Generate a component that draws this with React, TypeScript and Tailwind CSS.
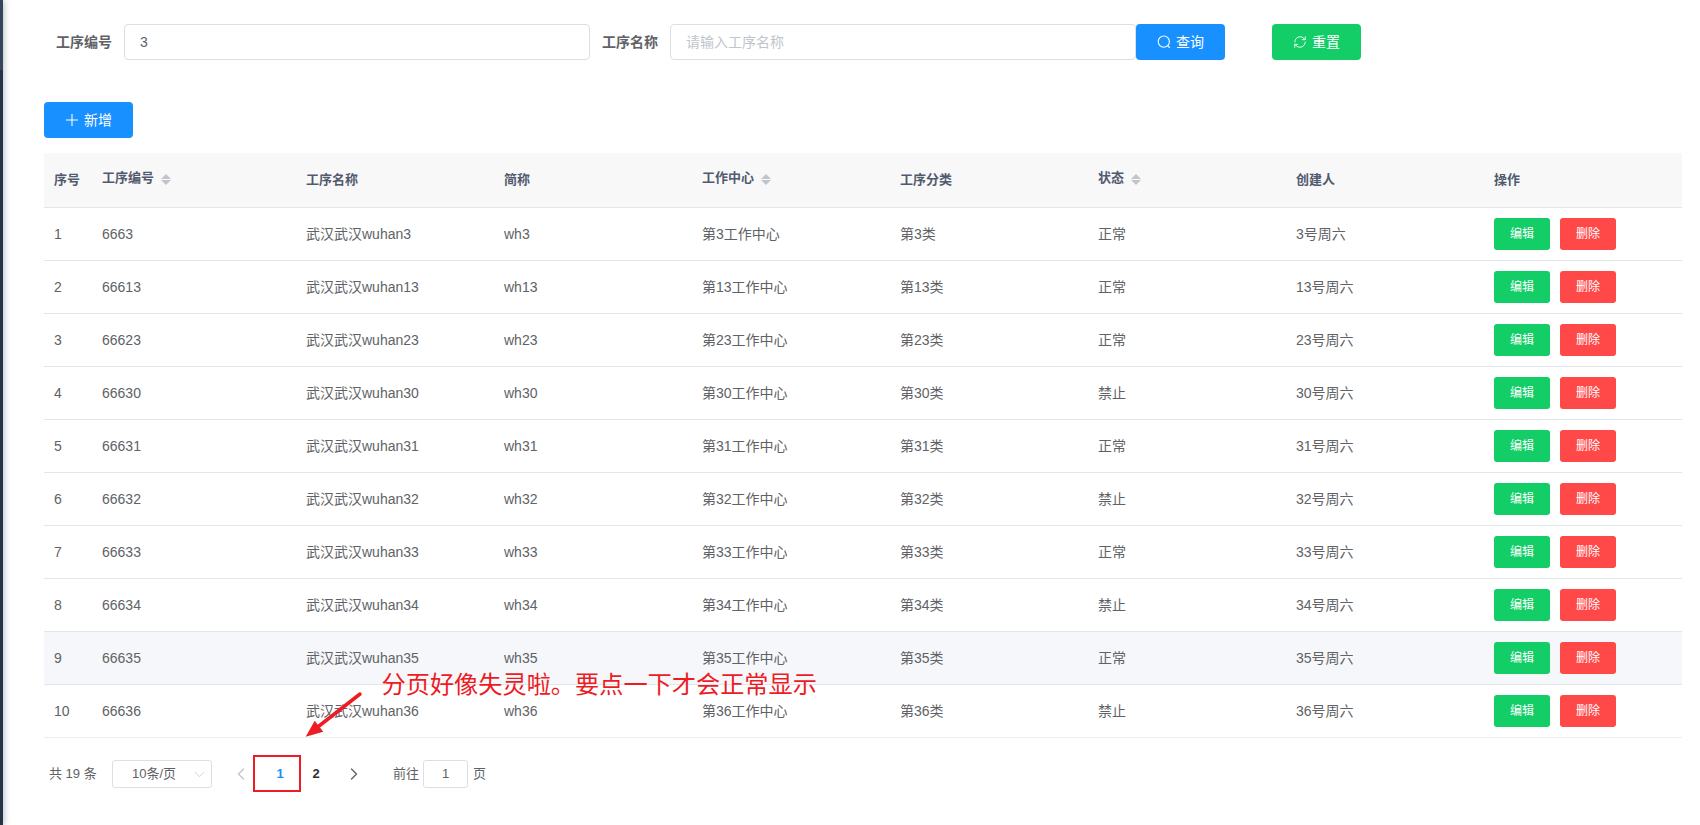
import { ChevronDown, ChevronLeft, ChevronRight, RefreshCw } from "lucide-react";

const font = "font-['Liberation_Sans','Noto_Sans_CJK_SC',sans-serif]";

const ids = [3, 13, 23, 30, 31, 32, 33, 34, 35, 36];
const disabled = [30, 32, 34, 36];

const columns = [
  { label: "序号", width: "w-[48px]" },
  { label: "工序编号", width: "w-[204px]", sort: true },
  { label: "工序名称", width: "w-[198px]" },
  { label: "简称", width: "w-[198px]" },
  { label: "工作中心", width: "w-[198px]", sort: true },
  { label: "工序分类", width: "w-[198px]" },
  { label: "状态", width: "w-[198px]", sort: true },
  { label: "创建人", width: "w-[198px]" },
  { label: "操作", width: "w-[198px]" },
];

function SortCaret() {
  return (
    <span className="ml-[7px] inline-flex translate-y-[1px] flex-col gap-[1px]">
      <i className="block h-0 w-0 border-x-[5px] border-b-[5.5px] border-x-transparent border-b-[#c0c4cc]" />
      <i className="block h-0 w-0 border-x-[5px] border-t-[5.5px] border-x-transparent border-t-[#c0c4cc]" />
    </span>
  );
}

function Button({ color, children }: { color: string; children: React.ReactNode }) {
  return (
    <button className={`flex h-9 w-[89px] items-center justify-center gap-[5px] rounded text-sm text-white ${color}`}>
      {children}
    </button>
  );
}

export default function App() {
  return (
    <div className={`flex h-[825px] w-[1700px] overflow-hidden bg-white text-[#606266] ${font}`}>
      <div className="h-full w-[3px] shrink-0 bg-gradient-to-b from-[#33465c] from-[8.5%] to-[#263445] to-[8.5%] shadow-[0_0_6px_rgba(0,21,41,0.5)]" />

      <main className="relative min-w-0 flex-1 pl-[41px] pt-6">
        <div className="flex h-9 items-center text-sm">
          <label className="ml-3 w-[56px] font-bold">工序编号</label>
          <div className="ml-3 flex h-9 w-[466px] items-center rounded border border-[#dcdfe6] px-[15px]">3</div>
          <label className="ml-3 w-[56px] font-bold">工序名称</label>
          <div className="ml-3 flex h-9 w-[466px] items-center rounded border border-[#dcdfe6] px-[15px] text-[#c0c4cc]">
            请输入工序名称
          </div>
          <Button color="bg-[#1890ff]">
            <svg width="14" height="14" viewBox="0 0 14 14" fill="none" stroke="currentColor" strokeWidth="1.1">
              <circle cx="6.8" cy="6.6" r="5.6" />
              <path d="M10.8 10.6 L12.8 12.8" />
            </svg>
            查询
          </Button>
          <div className="ml-[47px]">
            <Button color="bg-[#13ce66]">
              <RefreshCw size={14} strokeWidth={1.5} />
              重置
            </Button>
          </div>
        </div>

        <div className="mt-[42px]">
          <Button color="bg-[#1890ff]">
            <svg width="14" height="14" viewBox="0 0 14 14" fill="none" stroke="currentColor" strokeWidth="1.1">
              <path d="M7 1 V13 M1 7 H13" />
            </svg>
            新增
          </Button>
        </div>

        <table className="mt-[15px] w-[1638px] table-fixed border-separate border-spacing-0">
          <thead>
            <tr className="bg-[#f8f8f9] text-[13px] text-[#515a6e]">
              {columns.map((c) => (
                <th key={c.label} className={`${c.width} h-[55px] border-b border-[#dfe6ec] px-[10px] text-left font-bold`}>
                  <span className={`inline-flex items-center ${c.sort ? "-translate-y-[2px]" : ""}`}>
                    {c.label}
                    {c.sort && <SortCaret />}
                  </span>
                </th>
              ))}
            </tr>
          </thead>
          <tbody>
            {ids.map((id, i) => {
              const cell = `h-[53px] border-b px-[10px] ${i === 9 ? "border-[#ebeef5]" : "border-[#dfe6ec]"}`;
              return (
                <tr key={id} className={`text-sm ${i === 8 ? "bg-[#f5f7fa]" : ""}`}>
                  <td className={cell}>{i + 1}</td>
                  <td className={cell}>666{id}</td>
                  <td className={cell}>武汉武汉wuhan{id}</td>
                  <td className={cell}>wh{id}</td>
                  <td className={cell}>第{id}工作中心</td>
                  <td className={cell}>第{id}类</td>
                  <td className={cell}>{disabled.includes(id) ? "禁止" : "正常"}</td>
                  <td className={cell}>{id}号周六</td>
                  <td className={cell}>
                    <div className="flex gap-[10px]">
                      <button className="h-8 w-14 rounded-[3px] bg-[#13ce66] text-xs text-white">编辑</button>
                      <button className="h-8 w-14 rounded-[3px] bg-[#ff4949] text-xs text-white">删除</button>
                    </div>
                  </td>
                </tr>
              );
            })}
          </tbody>
        </table>

        <div className="mt-[22px] flex h-7 items-center text-[13px]">
          <span className="ml-[5px] w-[63px]">共 19 条</span>
          <div className="flex h-7 w-[100px] items-center justify-between rounded-[3px] border border-[#dcdfe6] pl-[19px] pr-[3px]">
            10条/页
            <ChevronDown size={17} strokeWidth={1} className="text-[#c0c4cc]" />
          </div>
          <ChevronLeft size={20} strokeWidth={1.6} className="ml-[19px] text-[#c0c4cc]" />
          <span className="ml-[25px] w-[8px] text-center font-bold text-[#1890ff]">1</span>
          <span className="ml-[28px] w-[8px] text-center font-bold text-[#303133]">2</span>
          <ChevronRight size={20} strokeWidth={1.6} className="ml-[24px] text-[#606266]" />
          <span className="ml-[29px]">前往</span>
          <div className="ml-[4px] flex h-7 w-[45px] items-center justify-center rounded-[3px] border border-[#dcdfe6]">1</div>
          <span className="ml-[5px]">页</span>
        </div>

        {/* screenshot annotation drawn on top of the page */}
        <span className="absolute left-[378.5px] top-[670px] whitespace-nowrap text-[24.2px] leading-[30px] text-[#ed1c24]">
          分页好像失灵啦。要点一下才会正常显示
        </span>
        <svg className="absolute left-[297px] top-[690px]" width="64" height="52" viewBox="0 0 64 52" fill="none">
          <path d="M60 4 L19 36" stroke="#ed1c24" strokeWidth="3.5" strokeLinecap="round" />
          <path d="M5.7 46.7 L14.7 30.7 L23.3 41.7 Z" fill="#ed1c24" />
        </svg>
        <div className="absolute left-[250px] top-[755px] h-[37px] w-[48px] border-2 border-[#ed1c24]" />
      </main>
    </div>
  );
}
